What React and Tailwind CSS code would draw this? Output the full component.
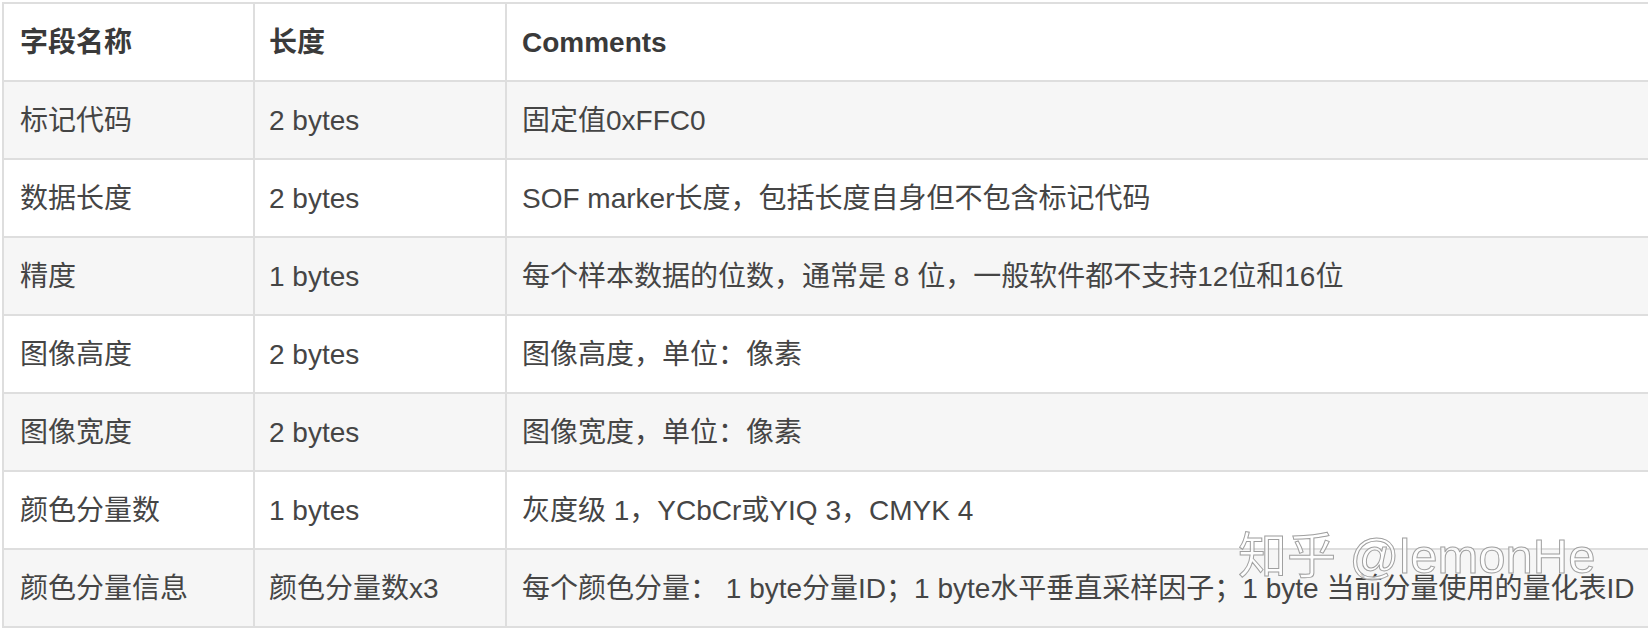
import React from "react";

const rows = [
  ["标记代码", "2 bytes", "固定值0xFFC0"],
  ["数据长度", "2 bytes", "SOF marker长度，包括长度自身但不包含标记代码"],
  ["精度", "1 bytes", "每个样本数据的位数，通常是 8 位，一般软件都不支持12位和16位"],
  ["图像高度", "2 bytes", "图像高度，单位：像素"],
  ["图像宽度", "2 bytes", "图像宽度，单位：像素"],
  ["颜色分量数", "1 bytes", "灰度级 1，YCbCr或YIQ 3，CMYK 4"],
  ["颜色分量信息", "颜色分量数x3", "每个颜色分量： 1 byte分量ID；1 byte水平垂直采样因子；1 byte 当前分量使用的量化表ID"],
];

function Row({ cells, gray, header }) {
  const bg = gray ? "bg-[#f6f6f6]" : "bg-white";
  const weight = header ? "font-bold text-[#3a3a3a]" : "font-normal text-[#454545]";
  return (
    <div className={`flex h-[78px] border-b-2 border-[#dedede] ${bg} ${weight}`}>
      <div className="w-[251px] shrink-0 border-r-2 border-[#dedede] flex items-center pl-[16px] pt-[2px] whitespace-nowrap">
        {cells[0]}
      </div>
      <div className="w-[252px] shrink-0 border-r-2 border-[#dedede] flex items-center pl-[14px] pt-[2px] whitespace-nowrap">
        {cells[1]}
      </div>
      <div className="flex-1 flex items-center pl-[15px] pt-[2px] whitespace-nowrap">{cells[2]}</div>
    </div>
  );
}

export default function App() {
  return (
    <div
      className="relative w-[1648px] h-[628px] overflow-hidden bg-white pt-[2px] pl-[2px] text-[28px] leading-none"
      style={{ fontFamily: '"Liberation Sans", "Noto Sans CJK SC", sans-serif' }}
    >
      <div className="w-[1700px] border-t-2 border-l-2 border-[#dedede]">
        <Row cells={["字段名称", "长度", "Comments"]} header />
        {rows.map((r, i) => (
          <Row key={i} cells={r} gray={i % 2 === 0} />
        ))}
      </div>
      <div className="absolute left-[1238px] top-[532px] text-[49px] leading-none whitespace-nowrap text-[rgba(255,255,255,0.75)] [-webkit-text-stroke:1px_#a0a0a0] pointer-events-none">
        知乎 @lemonHe
      </div>
    </div>
  );
}
